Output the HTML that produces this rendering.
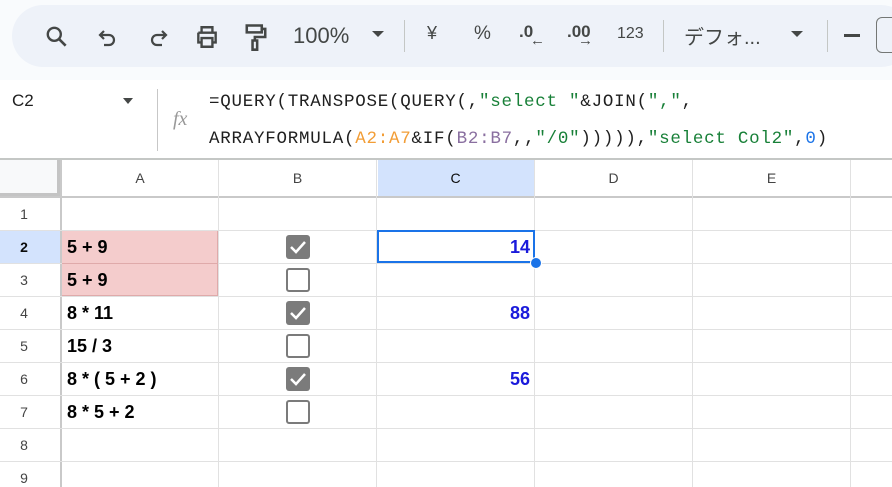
<!DOCTYPE html>
<html><head><meta charset="utf-8"><style>
*{margin:0;padding:0;box-sizing:border-box}
body{width:892px;height:487px;overflow:hidden;background:#fff;font-family:"Liberation Sans","Noto Sans CJK JP",sans-serif;position:relative}
.a{position:absolute}
.tb{left:0;top:0;width:892px;height:80px;background:#f9fbfd}
.pill{left:12px;top:5px;width:900px;height:62px;background:#eef2f9;border-radius:31px}
.ic{color:#444746;font-size:20px}
.sep{width:1px;background:#c4c7c5}
.mono{font-family:"Liberation Mono",monospace;font-size:17.5px;color:#1f1f1f;letter-spacing:0.75px}
.hl{background:#c9c9c9}
.vl{background:#e1e1e1}
.ch{color:#444;font-size:14px;text-align:center}
.rn{color:#444;font-size:14px;width:48px;text-align:center}
.cell{font-weight:bold;font-size:18px;color:#000}
.num{font-weight:bold;font-size:18px;color:#1a1adb;text-align:right}
.cb{width:24px;height:24px;border-radius:3px}
.cb.off{border:2.5px solid #7b7b7b;background:#fff}
</style></head><body>
<div class="a tb"></div>
<div class="a pill"></div>
<svg class="a" style="left:44px;top:24px" width="26" height="26" viewBox="0 0 24 24"><circle cx="9.5" cy="9.5" r="6" fill="none" stroke="#444746" stroke-width="2.2"/><path d="M14 14l6 6" stroke="#444746" stroke-width="2.4"/></svg>
<svg class="a" style="left:96px;top:26px" width="24" height="24" viewBox="0 0 24 24"><path d="M8 5L4 9l4 4M4 9h9a5 5 0 0 1 0 10H8" fill="none" stroke="#444746" stroke-width="2.2"/></svg>
<svg class="a" style="left:146px;top:26px" width="24" height="24" viewBox="0 0 24 24"><path d="M16 5l4 4-4 4M20 9h-9a5 5 0 0 0 0 10h5" fill="none" stroke="#444746" stroke-width="2.2"/></svg>
<svg class="a" style="left:193px;top:24px" width="28" height="26" viewBox="0 0 24 24"><path d="M7 7V3h10v4M4 8h16v9h-3M7 17H4V8M7 13h10v8H7z" fill="none" stroke="#444746" stroke-width="2.2"/></svg>
<svg class="a" style="left:242px;top:22px" width="28" height="30" viewBox="0 0 24 26"><path d="M4 3h13v6H4zM17 6h3v7h-9v3M9 16h4v8H9z" fill="none" stroke="#444746" stroke-width="2.2"/></svg>
<div class="a ic" style="left:293px;top:23px;font-size:22px">100%</div>
<div class="a" style="left:372px;top:31px;width:0;height:0;border-left:6px solid transparent;border-right:6px solid transparent;border-top:6px solid #444746"></div>
<div class="a sep" style="left:404px;top:20px;height:32px"></div>
<div class="a ic" style="left:427px;top:23px;font-size:18px">¥</div>
<div class="a ic" style="left:474px;top:23px;font-size:19px">%</div>
<div class="a ic" style="left:519px;top:22px;font-size:17px;font-weight:bold">.0</div>
<div class="a ic" style="left:530px;top:32px;font-size:15px;font-weight:bold">←</div>
<div class="a ic" style="left:567px;top:22px;font-size:17px;font-weight:bold">.00</div>
<div class="a ic" style="left:578px;top:32px;font-size:15px;font-weight:bold">→</div>
<div class="a ic" style="left:617px;top:25px;font-size:16px">123</div>
<div class="a sep" style="left:663px;top:20px;height:32px"></div>
<div class="a ic" style="left:684px;top:21px;font-size:20px">デフォ...</div>
<div class="a" style="left:791px;top:31px;width:0;height:0;border-left:6px solid transparent;border-right:6px solid transparent;border-top:6px solid #444746"></div>
<div class="a sep" style="left:827px;top:20px;height:32px"></div>
<div class="a" style="left:844px;top:34px;width:16px;height:2.5px;background:#444746"></div>
<div class="a" style="left:876px;top:17px;width:30px;height:36px;border:1.5px solid #747775;border-radius:6px"></div>

<div class="a" style="left:12px;top:91px;font-size:17px;color:#1f1f1f">C2</div>
<div class="a" style="left:123px;top:98px;width:0;height:0;border-left:5px solid transparent;border-right:5px solid transparent;border-top:6px solid #444746"></div>
<div class="a" style="left:157px;top:89px;width:1px;height:62px;background:#c7c7c7"></div>
<div class="a" style="left:173px;top:108px;font-family:'Liberation Serif',serif;font-style:italic;font-size:20px;color:#999">fx</div>
<div class="a mono" style="left:209px;top:92px">=QUERY(TRANSPOSE(QUERY(,<span style="color:#188038">"select "</span>&amp;JOIN(<span style="color:#188038">","</span>,</div>
<div class="a mono" style="left:209px;top:129px">ARRAYFORMULA(<span style="color:#f29d36">A2:A7</span>&amp;IF(<span style="color:#8a6fa0">B2:B7</span>,,<span style="color:#188038">"/0"</span>))))),<span style="color:#188038">"select Col2"</span>,<span style="color:#1a73e8">0</span>)</div>
<div class="a" style="left:0;top:158px;width:892px;height:2px;background:#c4c7c5"></div>

<div class="a" style="left:0;top:160px;width:61px;height:37px;background:#f8f9fa"></div>
<div class="a" style="left:378px;top:160px;width:156px;height:37px;background:#d3e3fd"></div>
<div class="a" style="left:0;top:231px;width:61px;height:32px;background:#d3e3fd"></div>
<div class="a" style="left:0;top:193px;width:62px;height:5px;background:#c4c4c4"></div>
<div class="a" style="left:57px;top:160px;width:5px;height:38px;background:#c4c4c4"></div>
<div class="a hl" style="left:0;top:196px;width:892px;height:2px"></div>
<div class="a hl" style="left:60px;top:160px;width:2px;height:327px"></div>

<div class="a vl" style="left:218px;top:160px;width:1px;height:327px"></div>
<div class="a vl" style="left:376px;top:160px;width:1px;height:327px"></div>
<div class="a vl" style="left:534px;top:160px;width:1px;height:327px"></div>
<div class="a vl" style="left:692px;top:160px;width:1px;height:327px"></div>
<div class="a vl" style="left:850px;top:160px;width:1px;height:327px"></div>
<div class="a vl" style="left:0;top:230px;width:892px;height:1px"></div>
<div class="a vl" style="left:0;top:263px;width:892px;height:1px"></div>
<div class="a vl" style="left:0;top:296px;width:892px;height:1px"></div>
<div class="a vl" style="left:0;top:329px;width:892px;height:1px"></div>
<div class="a vl" style="left:0;top:362px;width:892px;height:1px"></div>
<div class="a vl" style="left:0;top:395px;width:892px;height:1px"></div>
<div class="a vl" style="left:0;top:428px;width:892px;height:1px"></div>
<div class="a vl" style="left:0;top:461px;width:892px;height:1px"></div>

<div class="a ch" style="left:62px;top:170px;width:156px">A</div>
<div class="a ch" style="left:219px;top:170px;width:157px">B</div>
<div class="a ch" style="left:377px;top:170px;width:157px;color:#0b0b0b">C</div>
<div class="a ch" style="left:535px;top:170px;width:157px">D</div>
<div class="a ch" style="left:693px;top:170px;width:157px">E</div>

<div class="a rn" style="left:0;top:206px">1</div>
<div class="a rn" style="left:0;top:239px;font-weight:bold;color:#0b0b0b">2</div>
<div class="a rn" style="left:0;top:272px">3</div>
<div class="a rn" style="left:0;top:305px">4</div>
<div class="a rn" style="left:0;top:338px">5</div>
<div class="a rn" style="left:0;top:371px">6</div>
<div class="a rn" style="left:0;top:404px">7</div>
<div class="a rn" style="left:0;top:437px">8</div>
<div class="a rn" style="left:0;top:470px">9</div>

<div class="a" style="left:62px;top:231px;width:156px;height:65px;background:#f4cccc;border-bottom:1px solid #dfaaaa;border-right:1px solid #dfaaaa"></div>
<div class="a" style="left:62px;top:263px;width:156px;height:1px;background:#dfaaaa"></div>

<div class="a cell" style="left:67px;top:237px">5 + 9</div>
<div class="a cell" style="left:67px;top:270px">5 + 9</div>
<div class="a cell" style="left:67px;top:303px">8 * 11</div>
<div class="a cell" style="left:67px;top:336px">15 / 3</div>
<div class="a cell" style="left:67px;top:369px">8 * ( 5 + 2 )</div>
<div class="a cell" style="left:67px;top:402px">8 * 5 + 2</div>

<svg class="a" style="left:286px;top:235px" width="24" height="24"><rect width="24" height="24" rx="3" fill="#7b7b7b"/><path d="M5 12l5 5 9-10" fill="none" stroke="#fff" stroke-width="2.5"/></svg>
<div class="a cb off" style="left:286px;top:268px"></div>
<svg class="a" style="left:286px;top:301px" width="24" height="24"><rect width="24" height="24" rx="3" fill="#7b7b7b"/><path d="M5 12l5 5 9-10" fill="none" stroke="#fff" stroke-width="2.5"/></svg>
<div class="a cb off" style="left:286px;top:334px"></div>
<svg class="a" style="left:286px;top:367px" width="24" height="24"><rect width="24" height="24" rx="3" fill="#7b7b7b"/><path d="M5 12l5 5 9-10" fill="none" stroke="#fff" stroke-width="2.5"/></svg>
<div class="a cb off" style="left:286px;top:400px"></div>

<div class="a" style="left:377px;top:230px;width:158px;height:33px;border:2px solid #1a73e8"></div>
<div class="a" style="left:530px;top:257px;width:12px;height:12px;border-radius:50%;background:#1a73e8;border:1px solid #fff"></div>
<div class="a num" style="left:378px;top:237px;width:152px">14</div>
<div class="a num" style="left:378px;top:303px;width:152px">88</div>
<div class="a num" style="left:378px;top:369px;width:152px">56</div>
</body></html>
